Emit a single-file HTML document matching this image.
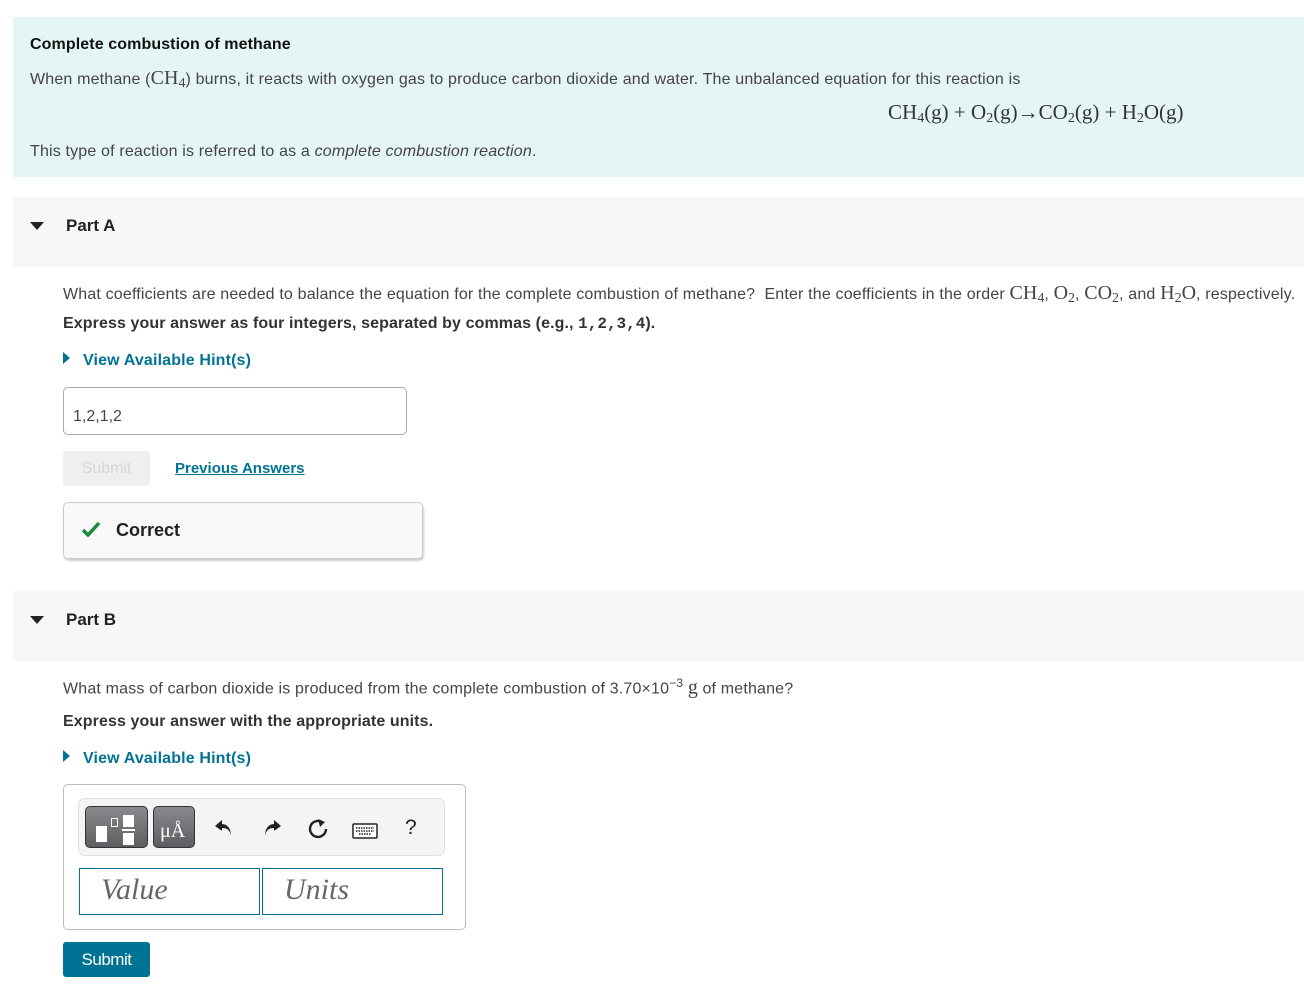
<!DOCTYPE html>
<html><head><meta charset="utf-8"><style>
*{margin:0;padding:0;box-sizing:border-box}
body{width:1304px;height:992px;background:#fff;font-family:"Liberation Sans",Arial,sans-serif;color:#333;position:relative;overflow:hidden;font-size:16px}
.a{position:absolute;white-space:nowrap}
.t{letter-spacing:0.17px}
.m{font-family:"Liberation Serif","DejaVu Serif",serif;font-size:20px;letter-spacing:0}
sub{font-size:14px;vertical-align:-3px}
.hint{color:#007394;font-weight:bold;font-size:16px;letter-spacing:0.15px}
.tri{display:inline-block;width:0;height:0;border-top:6px solid transparent;border-bottom:6px solid transparent;border-left:7px solid #007394;margin-right:13px;vertical-align:1px}
.dn{position:absolute;width:0;height:0;border-left:7px solid transparent;border-right:7px solid transparent;border-top:8px solid #222}
</style></head><body>
<div class="a" style="left:13px;top:17px;width:1291px;height:160px;background:#e5f5f6"></div>
<div class="a" style="left:30px;top:36px;font-weight:bold;font-size:16px;color:#111;letter-spacing:0.1px">Complete combustion of methane</div>
<div class="a t" style="left:30px;top:67px;font-size:16px;color:#444">When methane (<span class="m">CH<sub>4</sub></span>) burns, it reacts with oxygen gas to produce carbon dioxide and water. The unbalanced equation for this reaction is</div>
<div class="a m" style="left:888px;top:100px;font-size:21px;color:#333">CH<sub>4</sub>(g) + O<sub>2</sub>(g)→CO<sub>2</sub>(g) + H<sub>2</sub>O(g)</div>
<div class="a t" style="left:30px;top:143px;font-size:16px;color:#444">This type of reaction is referred to as a <i>complete combustion reaction</i>.</div>

<div class="a" style="left:13px;top:197px;width:1291px;height:70px;background:#f7f7f7"></div>
<div class="dn" style="left:30px;top:222px"></div>
<div class="a" style="left:66px;top:216px;font-weight:bold;font-size:17px;color:#222">Part A</div>
<div class="a t" style="left:63px;top:282px;font-size:16px;color:#444">What coefficients are needed to balance the equation for the complete combustion of methane?&nbsp; Enter the coefficients in the order <span class="m">CH<sub>4</sub></span>, <span class="m">O<sub>2</sub></span>, <span class="m">CO<sub>2</sub></span>, and <span class="m">H<sub>2</sub>O</span>, respectively.</div>
<div class="a" style="left:63px;top:315px;font-weight:bold;font-size:16px;color:#333;letter-spacing:0.1px">Express your answer as four integers, separated by commas (e.g., <span style="font-family:'Liberation Mono',monospace;letter-spacing:0">1,2,3,4</span>).</div>
<div class="a hint" style="left:63px;top:352px"><span class="tri"></span>View Available Hint(s)</div>
<div class="a" style="left:63px;top:387px;width:344px;height:48px;border:1px solid #aaa;border-radius:5px"></div>
<div class="a" style="left:73px;top:408px;font-size:16px;color:#444">1,2,1,2</div>
<div class="a" style="left:63px;top:451px;width:87px;height:35px;background:#efefef;border-radius:3px;color:#d5d5d5;font-size:16px;text-align:center;line-height:35px">Submit</div>
<div class="a" style="left:175px;top:460px;font-size:15px;font-weight:bold;color:#007394;text-decoration:underline">Previous Answers</div>
<div class="a" style="left:63px;top:502px;width:360px;height:57px;border:1px solid #ccc;border-radius:5px;background:#f9f9f9;box-shadow:1px 2px 2px #ccc"></div>
<svg class="a" style="left:82px;top:521px" width="18" height="16" viewBox="0 0 18 16"><path d="M1 9 L6 14 L17 2" stroke="#1a8a3a" stroke-width="3.5" fill="none"/></svg>
<div class="a" style="left:116px;top:520px;font-weight:bold;font-size:18px;color:#222">Correct</div>

<div class="a" style="left:13px;top:591px;width:1291px;height:70px;background:#f7f7f7"></div>
<div class="dn" style="left:30px;top:616px"></div>
<div class="a" style="left:66px;top:610px;font-weight:bold;font-size:17px;color:#222">Part B</div>
<div class="a t" style="left:63px;top:676px;font-size:16px;color:#444">What mass of carbon dioxide is produced from the complete combustion of 3.70×10<sup style="font-size:12px">−3</sup> <span class="m">g</span> of methane?</div>
<div class="a" style="left:63px;top:713px;font-weight:bold;font-size:16px;color:#333;letter-spacing:0.1px">Express your answer with the appropriate units.</div>
<div class="a hint" style="left:63px;top:750px"><span class="tri"></span>View Available Hint(s)</div>
<div class="a" style="left:63px;top:784px;width:403px;height:146px;border:1px solid #bbb;border-radius:5px"></div>
<div class="a" style="left:78px;top:798px;width:367px;height:58px;border:1px solid #e0e0e0;border-radius:7px;background:#f4f4f4"></div>
<div class="a" style="left:85px;top:806px;width:63px;height:42px;border:1px solid #333;border-radius:5px;background:linear-gradient(#8a8a8e,#5e5e62)"></div>
<div class="a" style="left:96px;top:826px;width:11px;height:16px;background:#fff"></div>
<div class="a" style="left:111px;top:818px;width:7px;height:9px;border:1px solid #fff"></div>
<div class="a" style="left:123px;top:815px;width:11px;height:12px;background:#fff"></div>
<div class="a" style="left:122px;top:829px;width:13px;height:2px;background:#fff"></div>
<div class="a" style="left:123px;top:833px;width:11px;height:12px;background:#fff"></div>
<div class="a" style="left:153px;top:806px;width:42px;height:42px;border:1px solid #333;border-radius:5px;background:linear-gradient(#8a8a8e,#5e5e62)"></div>
<div class="a" style="left:160px;top:820px;color:#fff;font-family:'Liberation Serif',serif;font-size:20px">μÅ</div>
<svg class="a" style="left:214px;top:818px" width="20" height="20" viewBox="0 0 20 20"><path d="M8 2 L1 8 L8 13 L8 10 C13 10 16 12 17 18 C17 10 13 6 8 6Z" fill="#222"/></svg>
<svg class="a" style="left:262px;top:818px" width="20" height="20" viewBox="0 0 20 20"><path d="M12 2 L19 8 L12 13 L12 10 C7 10 4 12 3 18 C3 10 7 6 12 6Z" fill="#222"/></svg>
<svg class="a" style="left:306px;top:817px" width="24" height="24" viewBox="0 0 24 24"><path d="M16 5 A8 8 0 1 0 20 12" stroke="#222" stroke-width="2.4" fill="none"/><path d="M12 2 L19 5 L14 10Z" fill="#222"/></svg>
<svg class="a" style="left:352px;top:823px" width="26" height="16" viewBox="0 0 26 16"><rect x="1" y="1" width="24" height="14" rx="1" fill="#fff" stroke="#222" stroke-width="1.5"/><path d="M4 5h18M4 8h18M7 11h12" stroke="#222" stroke-width="1.5" stroke-dasharray="1.5 1"/></svg>
<div class="a" style="left:405px;top:816px;font-size:21px;color:#222">?</div>
<div class="a" style="left:79px;top:868px;width:181px;height:47px;border:1px solid #007394"></div>
<div class="a" style="left:262px;top:868px;width:181px;height:47px;border:1px solid #007394"></div>
<div class="a" style="left:101px;top:873px;font-family:'Liberation Serif',serif;font-style:italic;font-size:30px;color:#666">Value</div>
<div class="a" style="left:284px;top:873px;font-family:'Liberation Serif',serif;font-style:italic;font-size:30px;color:#666">Units</div>
<div class="a" style="left:63px;top:942px;width:87px;height:35px;background:#007394;border-radius:3px;color:#fff;font-size:17px;text-align:center;line-height:35px;letter-spacing:-0.5px">Submit</div>
</body></html>
